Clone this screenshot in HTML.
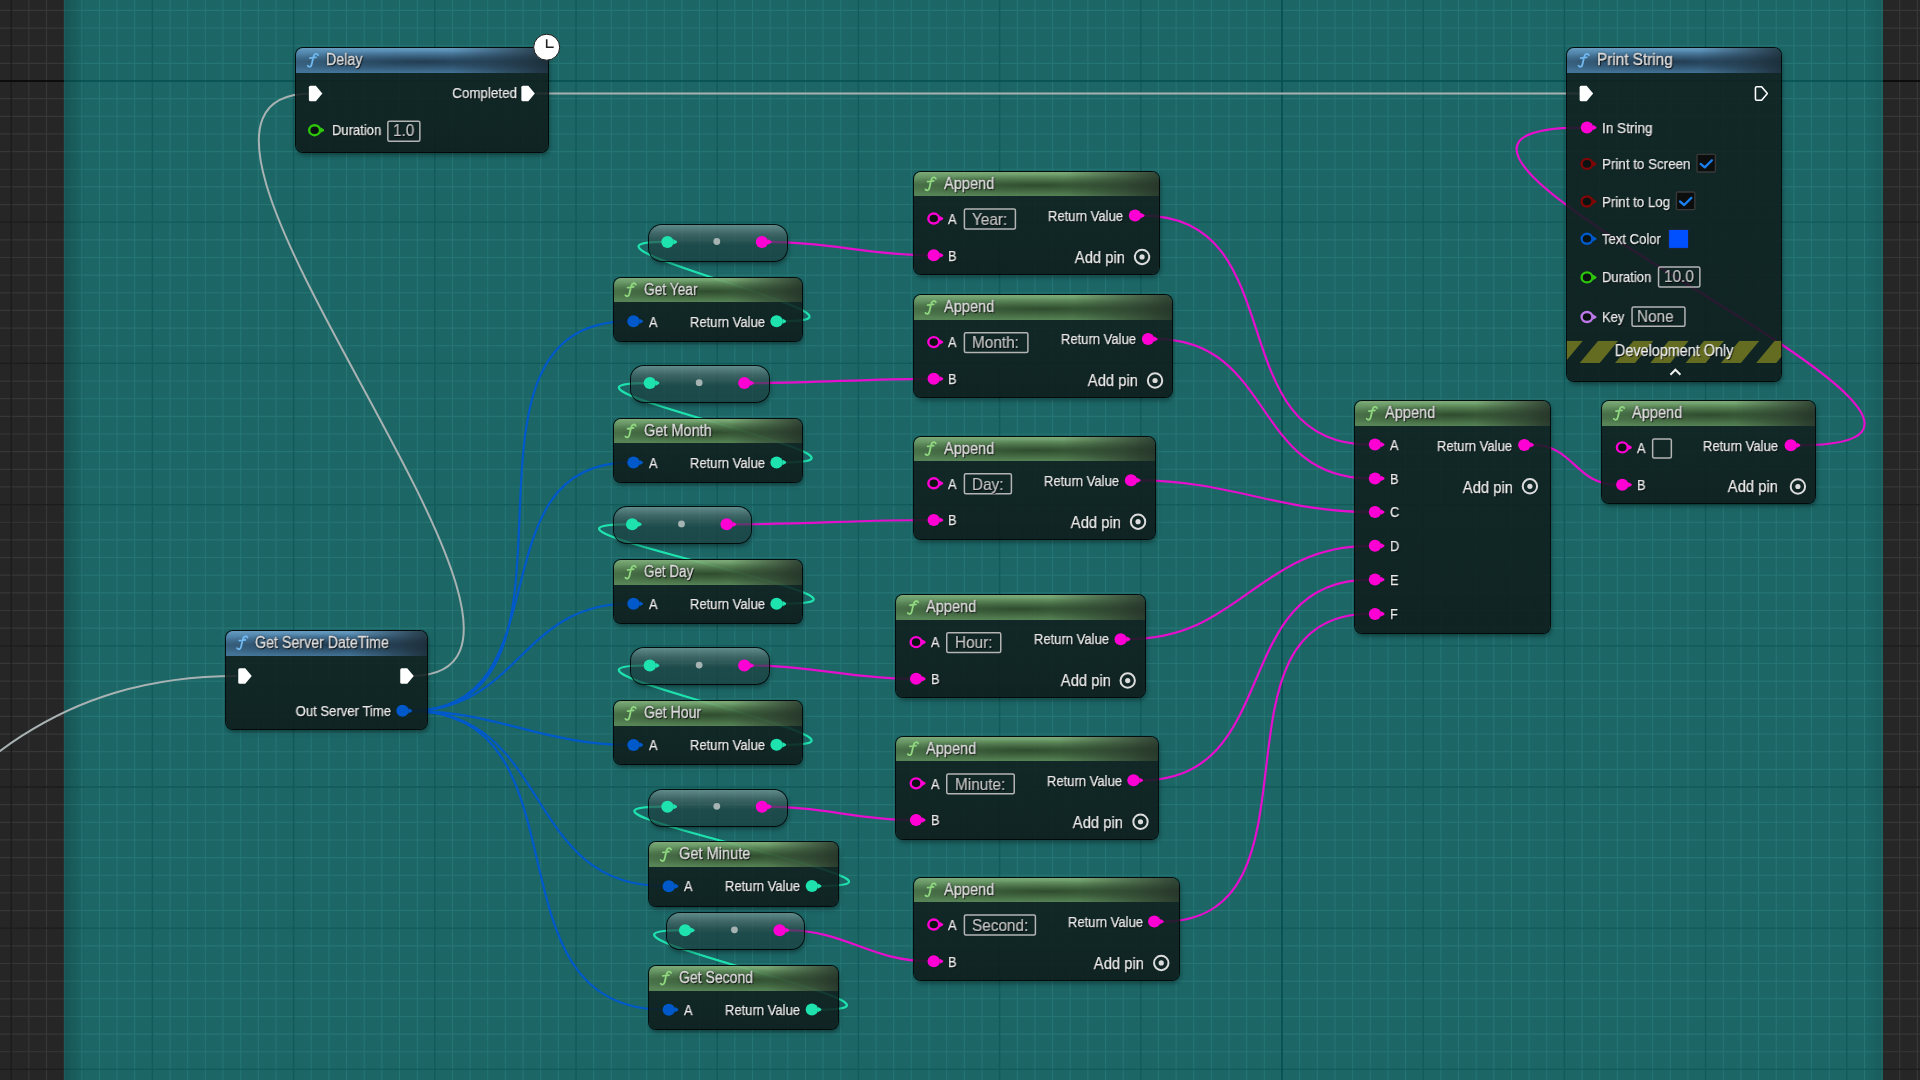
<!DOCTYPE html><html><head><meta charset="utf-8"><style>html,body{margin:0;padding:0;width:1920px;height:1080px;overflow:hidden;background:#262626;font-family:"Liberation Sans", sans-serif;}
.n{position:absolute;border-radius:7px;box-shadow:0 0 0 1px rgba(0,0,0,0.85),1px 3px 5px rgba(0,0,0,0.42);}
.hd{position:absolute;left:0;top:0;right:0;border-radius:7px 7px 0 0;}
.bd{position:absolute;left:0;right:0;bottom:0;border-radius:0 0 7px 7px;background:linear-gradient(to bottom,rgba(16,30,29,0.86),rgba(13,26,25,0.88));}
.hb{background:linear-gradient(to right,rgba(20,30,36,0) 0%,rgba(20,30,36,0) 62%,rgba(20,30,36,0.75) 100%),radial-gradient(ellipse 72% 45% at 50% 56%,rgba(15,30,45,0.62) 0%,rgba(15,30,45,0) 100%),linear-gradient(to bottom,rgba(110,160,200,0.92) 0%,rgba(90,140,182,0.9) 18%,rgba(70,112,150,0.88) 55%,rgba(72,118,158,0.9) 100%);}
.hg{background:linear-gradient(to right,rgba(28,36,32,0) 0%,rgba(28,36,32,0) 62%,rgba(28,36,32,0.75) 100%),radial-gradient(ellipse 72% 45% at 50% 56%,rgba(25,45,22,0.62) 0%,rgba(25,45,22,0) 100%),linear-gradient(to bottom,rgba(134,176,122,0.92) 0%,rgba(114,158,102,0.9) 18%,rgba(92,132,82,0.88) 55%,rgba(94,136,84,0.9) 100%);}
.t{position:absolute;white-space:nowrap;will-change:transform;color:#ececec;-webkit-text-stroke:0.25px #e0e0e0;text-shadow:1px 1px 1px rgba(0,0,0,0.9);transform-origin:0 50%;line-height:1;}
.tt{font-size:16px;color:#dcdcdc;text-shadow:0 0 3px rgba(0,0,0,0.55),1px 1px 1px rgba(0,0,0,0.9);}
.pl{font-size:13.5px;}
.fi{position:absolute;font-family:"Liberation Serif",serif;font-style:italic;font-size:17px;line-height:1;}
.box{position:absolute;border:1.5px solid #b8b8b8;box-sizing:border-box;border-radius:1px;}
</style></head><body><svg width="1920" height="1080" style="position:absolute;left:0;top:0"><rect x="0" y="0" width="1920" height="1080" fill="#262626"/><rect x="64" y="0" width="1819" height="1080" fill="#1c6666"/><defs><clipPath id="ct"><rect x="64" y="0" width="1819" height="1080"/></clipPath><clipPath id="cd"><path d="M0 0H64V1080H0Z M1883 0H1920V1080H1883Z"/></clipPath></defs><g clip-path="url(#cd)"><path d="M28.85 0V1080M46.50 0V1080M64.15 0V1080M81.80 0V1080M99.45 0V1080M117.10 0V1080M134.75 0V1080M170.05 0V1080M187.70 0V1080M205.35 0V1080M223.00 0V1080M240.65 0V1080M258.30 0V1080M275.95 0V1080M311.25 0V1080M328.90 0V1080M346.55 0V1080M364.20 0V1080M381.85 0V1080M399.50 0V1080M417.15 0V1080M452.45 0V1080M470.10 0V1080M487.75 0V1080M505.40 0V1080M523.05 0V1080M540.70 0V1080M558.35 0V1080M593.65 0V1080M611.30 0V1080M628.95 0V1080M646.60 0V1080M664.25 0V1080M681.90 0V1080M699.55 0V1080M734.85 0V1080M752.50 0V1080M770.15 0V1080M787.80 0V1080M805.45 0V1080M823.10 0V1080M840.75 0V1080M876.05 0V1080M893.70 0V1080M911.35 0V1080M929.00 0V1080M946.65 0V1080M964.30 0V1080M981.95 0V1080M1017.25 0V1080M1034.90 0V1080M1052.55 0V1080M1070.20 0V1080M1087.85 0V1080M1105.50 0V1080M1123.15 0V1080M1158.45 0V1080M1176.10 0V1080M1193.75 0V1080M1211.40 0V1080M1229.05 0V1080M1246.70 0V1080M1264.35 0V1080M1299.65 0V1080M1317.30 0V1080M1334.95 0V1080M1352.60 0V1080M1370.25 0V1080M1387.90 0V1080M1405.55 0V1080M1440.85 0V1080M1458.50 0V1080M1476.15 0V1080M1493.80 0V1080M1511.45 0V1080M1529.10 0V1080M1546.75 0V1080M1582.05 0V1080M1599.70 0V1080M1617.35 0V1080M1635.00 0V1080M1652.65 0V1080M1670.30 0V1080M1687.95 0V1080M1723.25 0V1080M1740.90 0V1080M1758.55 0V1080M1776.20 0V1080M1793.85 0V1080M1811.50 0V1080M1829.15 0V1080M1864.45 0V1080M1882.10 0V1080M1899.75 0V1080M1917.40 0V1080M0 10.40H1920M0 28.05H1920M0 45.70H1920M0 63.35H1920M0 98.65H1920M0 116.30H1920M0 133.95H1920M0 151.60H1920M0 169.25H1920M0 186.90H1920M0 204.55H1920M0 239.85H1920M0 257.50H1920M0 275.15H1920M0 292.80H1920M0 310.45H1920M0 328.10H1920M0 345.75H1920M0 381.05H1920M0 398.70H1920M0 416.35H1920M0 434.00H1920M0 451.65H1920M0 469.30H1920M0 486.95H1920M0 522.25H1920M0 539.90H1920M0 557.55H1920M0 575.20H1920M0 592.85H1920M0 610.50H1920M0 628.15H1920M0 663.45H1920M0 681.10H1920M0 698.75H1920M0 716.40H1920M0 734.05H1920M0 751.70H1920M0 769.35H1920M0 804.65H1920M0 822.30H1920M0 839.95H1920M0 857.60H1920M0 875.25H1920M0 892.90H1920M0 910.55H1920M0 945.85H1920M0 963.50H1920M0 981.15H1920M0 998.80H1920M0 1016.45H1920M0 1034.10H1920M0 1051.75H1920" stroke="#373737" stroke-width="1.2" fill="none"/><path d="M11.20 0V1080M152.40 0V1080M293.60 0V1080M434.80 0V1080M576.00 0V1080M717.20 0V1080M858.40 0V1080M999.60 0V1080M1140.80 0V1080M1423.20 0V1080M1564.40 0V1080M1705.60 0V1080M1846.80 0V1080M0 222.20H1920M0 363.40H1920M0 504.60H1920M0 645.80H1920M0 787.00H1920M0 928.20H1920M0 1069.40H1920" stroke="#1c1c1c" stroke-width="1.3" fill="none"/><path d="M1282.0 0V1080M0 81.0H1920" stroke="#050505" stroke-width="1.6" fill="none"/></g><g clip-path="url(#ct)"><path d="M28.85 0V1080M46.50 0V1080M64.15 0V1080M81.80 0V1080M99.45 0V1080M117.10 0V1080M134.75 0V1080M170.05 0V1080M187.70 0V1080M205.35 0V1080M223.00 0V1080M240.65 0V1080M258.30 0V1080M275.95 0V1080M311.25 0V1080M328.90 0V1080M346.55 0V1080M364.20 0V1080M381.85 0V1080M399.50 0V1080M417.15 0V1080M452.45 0V1080M470.10 0V1080M487.75 0V1080M505.40 0V1080M523.05 0V1080M540.70 0V1080M558.35 0V1080M593.65 0V1080M611.30 0V1080M628.95 0V1080M646.60 0V1080M664.25 0V1080M681.90 0V1080M699.55 0V1080M734.85 0V1080M752.50 0V1080M770.15 0V1080M787.80 0V1080M805.45 0V1080M823.10 0V1080M840.75 0V1080M876.05 0V1080M893.70 0V1080M911.35 0V1080M929.00 0V1080M946.65 0V1080M964.30 0V1080M981.95 0V1080M1017.25 0V1080M1034.90 0V1080M1052.55 0V1080M1070.20 0V1080M1087.85 0V1080M1105.50 0V1080M1123.15 0V1080M1158.45 0V1080M1176.10 0V1080M1193.75 0V1080M1211.40 0V1080M1229.05 0V1080M1246.70 0V1080M1264.35 0V1080M1299.65 0V1080M1317.30 0V1080M1334.95 0V1080M1352.60 0V1080M1370.25 0V1080M1387.90 0V1080M1405.55 0V1080M1440.85 0V1080M1458.50 0V1080M1476.15 0V1080M1493.80 0V1080M1511.45 0V1080M1529.10 0V1080M1546.75 0V1080M1582.05 0V1080M1599.70 0V1080M1617.35 0V1080M1635.00 0V1080M1652.65 0V1080M1670.30 0V1080M1687.95 0V1080M1723.25 0V1080M1740.90 0V1080M1758.55 0V1080M1776.20 0V1080M1793.85 0V1080M1811.50 0V1080M1829.15 0V1080M1864.45 0V1080M1882.10 0V1080M1899.75 0V1080M1917.40 0V1080M0 10.40H1920M0 28.05H1920M0 45.70H1920M0 63.35H1920M0 98.65H1920M0 116.30H1920M0 133.95H1920M0 151.60H1920M0 169.25H1920M0 186.90H1920M0 204.55H1920M0 239.85H1920M0 257.50H1920M0 275.15H1920M0 292.80H1920M0 310.45H1920M0 328.10H1920M0 345.75H1920M0 381.05H1920M0 398.70H1920M0 416.35H1920M0 434.00H1920M0 451.65H1920M0 469.30H1920M0 486.95H1920M0 522.25H1920M0 539.90H1920M0 557.55H1920M0 575.20H1920M0 592.85H1920M0 610.50H1920M0 628.15H1920M0 663.45H1920M0 681.10H1920M0 698.75H1920M0 716.40H1920M0 734.05H1920M0 751.70H1920M0 769.35H1920M0 804.65H1920M0 822.30H1920M0 839.95H1920M0 857.60H1920M0 875.25H1920M0 892.90H1920M0 910.55H1920M0 945.85H1920M0 963.50H1920M0 981.15H1920M0 998.80H1920M0 1016.45H1920M0 1034.10H1920M0 1051.75H1920" stroke="#267575" stroke-width="1.1" fill="none"/><path d="M11.20 0V1080M152.40 0V1080M293.60 0V1080M434.80 0V1080M576.00 0V1080M717.20 0V1080M858.40 0V1080M999.60 0V1080M1140.80 0V1080M1423.20 0V1080M1564.40 0V1080M1705.60 0V1080M1846.80 0V1080M0 222.20H1920M0 363.40H1920M0 504.60H1920M0 645.80H1920M0 787.00H1920M0 928.20H1920M0 1069.40H1920" stroke="#135a5a" stroke-width="1.3" fill="none"/><path d="M1282.0 0V1080M0 81.0H1920" stroke="#054f50" stroke-width="1.6" fill="none"/><defs><linearGradient id="vl" x1="0" x2="1" y1="0" y2="0"><stop offset="0" stop-color="#000" stop-opacity="0.18"/><stop offset="1" stop-color="#000" stop-opacity="0"/></linearGradient><linearGradient id="vr" x1="1" x2="0" y1="0" y2="0"><stop offset="0" stop-color="#000" stop-opacity="0.1"/><stop offset="1" stop-color="#000" stop-opacity="0"/></linearGradient></defs><rect x="64" y="0" width="22" height="1080" fill="url(#vl)"/><rect x="1865" y="0" width="18" height="1080" fill="url(#vr)"/></g></svg><svg width="1920" height="1080" style="position:absolute;left:0;top:0"><path d="M-480.00 1060.00C-112.98 1060.00 -130.02 675.95 237.00 675.95" stroke="#a8b2b2" stroke-width="2.0" fill="none"/><path d="M411.00 675.95C627.27 675.95 95.33 93.50 311.60 93.50" stroke="#a8b2b2" stroke-width="2.0" fill="none"/><path d="M536.10 93.50C869.43 93.50 1249.07 93.50 1582.40 93.50" stroke="#a8b2b2" stroke-width="2.2" fill="none"/><path d="M410.50 710.85C613.03 710.85 426.07 321.35 628.60 321.35" stroke="#0059cb" stroke-width="2.2" fill="none"/><path d="M410.50 710.85C565.97 710.85 473.13 462.55 628.60 462.55" stroke="#0059cb" stroke-width="2.2" fill="none"/><path d="M410.50 710.85C518.90 710.85 520.20 603.75 628.60 603.75" stroke="#0059cb" stroke-width="2.2" fill="none"/><path d="M410.50 710.85C494.57 710.85 544.53 744.95 628.60 744.95" stroke="#0059cb" stroke-width="2.2" fill="none"/><path d="M410.50 710.85C553.40 710.85 521.00 886.15 663.90 886.15" stroke="#0059cb" stroke-width="2.2" fill="none"/><path d="M410.50 710.85C594.58 710.85 479.82 1009.70 663.90 1009.70" stroke="#0059cb" stroke-width="2.2" fill="none"/><path d="M784.60 321.25C905.01 321.25 543.09 241.90 663.50 241.90" stroke="#1fe3af" stroke-width="2.2" fill="none"/><path d="M784.60 462.45C916.78 462.45 513.67 383.10 645.85 383.10" stroke="#1fe3af" stroke-width="2.2" fill="none"/><path d="M784.60 603.65C928.54 603.65 484.26 524.30 628.20 524.30" stroke="#1fe3af" stroke-width="2.2" fill="none"/><path d="M784.60 744.85C916.78 744.85 513.67 665.50 645.85 665.50" stroke="#1fe3af" stroke-width="2.2" fill="none"/><path d="M819.90 886.05C963.84 886.05 519.56 806.70 663.50 806.70" stroke="#1fe3af" stroke-width="2.2" fill="none"/><path d="M819.90 1009.60C952.08 1009.60 548.97 930.25 681.15 930.25" stroke="#1fe3af" stroke-width="2.2" fill="none"/><path d="M770.00 241.90C827.33 241.90 871.32 255.25 928.65 255.25" stroke="#e60ecd" stroke-width="2.2" fill="none"/><path d="M752.35 383.10C812.55 383.10 868.45 378.80 928.65 378.80" stroke="#e60ecd" stroke-width="2.2" fill="none"/><path d="M734.70 524.30C800.78 524.30 862.57 520.00 928.65 520.00" stroke="#e60ecd" stroke-width="2.2" fill="none"/><path d="M752.35 665.50C809.68 665.50 853.67 678.85 911.00 678.85" stroke="#e60ecd" stroke-width="2.2" fill="none"/><path d="M770.00 806.70C821.45 806.70 859.55 820.05 911.00 820.05" stroke="#e60ecd" stroke-width="2.2" fill="none"/><path d="M787.65 930.25C844.98 930.25 871.32 961.25 928.65 961.25" stroke="#e60ecd" stroke-width="2.2" fill="none"/><path d="M1143.05 215.55C1295.02 215.55 1217.93 444.60 1369.90 444.60" stroke="#e60ecd" stroke-width="2.2" fill="none"/><path d="M1156.05 339.10C1273.77 339.10 1252.18 478.40 1369.90 478.40" stroke="#e60ecd" stroke-width="2.2" fill="none"/><path d="M1139.05 480.30C1226.60 480.30 1282.35 512.10 1369.90 512.10" stroke="#e60ecd" stroke-width="2.2" fill="none"/><path d="M1128.70 639.15C1240.22 639.15 1258.38 545.80 1369.90 545.80" stroke="#e60ecd" stroke-width="2.2" fill="none"/><path d="M1141.50 780.35C1284.55 780.35 1226.85 579.60 1369.90 579.60" stroke="#e60ecd" stroke-width="2.2" fill="none"/><path d="M1162.25 921.55C1334.02 921.55 1198.13 613.90 1369.90 613.90" stroke="#e60ecd" stroke-width="2.2" fill="none"/><path d="M1532.30 444.90C1573.83 444.90 1575.47 484.80 1617.00 484.80" stroke="#e60ecd" stroke-width="2.2" fill="none"/><path d="M1798.80 445.30C2093.07 445.30 1288.13 127.60 1582.40 127.60" stroke="#e60ecd" stroke-width="2.2" fill="none"/></svg><div class="n" style="left:296.10px;top:48.20px;width:252.20px;height:103.50px;"><div class="hd hb" style="height:24.50px"></div><div class="bd" style="top:24.50px"></div></div><div class="n" style="left:1566.90px;top:48.20px;width:214.30px;height:332.60px;"><div class="hd hb" style="height:24.50px"></div><div class="bd" style="top:24.50px"></div></div><div class="n" style="left:225.50px;top:630.65px;width:201.80px;height:97.90px;"><div class="hd hb" style="height:25.00px"></div><div class="bd" style="top:25.00px"></div></div><div class="n" style="left:913.85px;top:171.75px;width:245.60px;height:102.00px;"><div class="hd hg" style="height:24.50px"></div><div class="bd" style="top:24.50px"></div></div><div class="n" style="left:913.85px;top:295.30px;width:258.60px;height:102.00px;"><div class="hd hg" style="height:24.50px"></div><div class="bd" style="top:24.50px"></div></div><div class="n" style="left:913.85px;top:436.50px;width:241.60px;height:102.00px;"><div class="hd hg" style="height:24.50px"></div><div class="bd" style="top:24.50px"></div></div><div class="n" style="left:896.20px;top:595.35px;width:248.90px;height:102.00px;"><div class="hd hg" style="height:24.50px"></div><div class="bd" style="top:24.50px"></div></div><div class="n" style="left:896.20px;top:736.55px;width:261.70px;height:102.00px;"><div class="hd hg" style="height:24.50px"></div><div class="bd" style="top:24.50px"></div></div><div class="n" style="left:913.85px;top:877.75px;width:264.80px;height:102.00px;"><div class="hd hg" style="height:24.50px"></div><div class="bd" style="top:24.50px"></div></div><div class="n" style="left:1355.10px;top:401.20px;width:194.50px;height:232.30px;"><div class="hd hg" style="height:24.50px"></div><div class="bd" style="top:24.50px"></div></div><div class="n" style="left:1602.20px;top:401.20px;width:212.60px;height:101.70px;"><div class="hd hg" style="height:24.50px"></div><div class="bd" style="top:24.50px"></div></div><div class="n" style="left:613.80px;top:277.65px;width:188.50px;height:63.20px;"><div class="hd hg" style="height:24.50px"></div><div class="bd" style="top:24.50px"></div></div><div class="n" style="left:613.80px;top:418.85px;width:188.50px;height:63.20px;"><div class="hd hg" style="height:24.50px"></div><div class="bd" style="top:24.50px"></div></div><div class="n" style="left:613.80px;top:560.05px;width:188.50px;height:63.20px;"><div class="hd hg" style="height:24.50px"></div><div class="bd" style="top:24.50px"></div></div><div class="n" style="left:613.80px;top:701.25px;width:188.50px;height:63.20px;"><div class="hd hg" style="height:24.50px"></div><div class="bd" style="top:24.50px"></div></div><div class="n" style="left:649.10px;top:842.45px;width:188.50px;height:63.20px;"><div class="hd hg" style="height:24.50px"></div><div class="bd" style="top:24.50px"></div></div><div class="n" style="left:649.10px;top:966.00px;width:188.50px;height:63.20px;"><div class="hd hg" style="height:24.50px"></div><div class="bd" style="top:24.50px"></div></div><div class="n" style="left:649.10px;top:224.70px;width:137.50px;height:36.00px;border-radius:13px;background:linear-gradient(to bottom,rgba(120,150,150,0.75) 0%,rgba(75,100,100,0.7) 25%,rgba(30,60,60,0.65) 55%,rgba(25,55,55,0.65) 100%);"></div><div class="n" style="left:631.45px;top:365.90px;width:137.50px;height:36.00px;border-radius:13px;background:linear-gradient(to bottom,rgba(120,150,150,0.75) 0%,rgba(75,100,100,0.7) 25%,rgba(30,60,60,0.65) 55%,rgba(25,55,55,0.65) 100%);"></div><div class="n" style="left:613.80px;top:507.10px;width:137.50px;height:36.00px;border-radius:13px;background:linear-gradient(to bottom,rgba(120,150,150,0.75) 0%,rgba(75,100,100,0.7) 25%,rgba(30,60,60,0.65) 55%,rgba(25,55,55,0.65) 100%);"></div><div class="n" style="left:631.45px;top:648.30px;width:137.50px;height:36.00px;border-radius:13px;background:linear-gradient(to bottom,rgba(120,150,150,0.75) 0%,rgba(75,100,100,0.7) 25%,rgba(30,60,60,0.65) 55%,rgba(25,55,55,0.65) 100%);"></div><div class="n" style="left:649.10px;top:789.50px;width:137.50px;height:36.00px;border-radius:13px;background:linear-gradient(to bottom,rgba(120,150,150,0.75) 0%,rgba(75,100,100,0.7) 25%,rgba(30,60,60,0.65) 55%,rgba(25,55,55,0.65) 100%);"></div><div class="n" style="left:666.75px;top:913.05px;width:137.50px;height:36.00px;border-radius:13px;background:linear-gradient(to bottom,rgba(120,150,150,0.75) 0%,rgba(75,100,100,0.7) 25%,rgba(30,60,60,0.65) 55%,rgba(25,55,55,0.65) 100%);"></div><svg width="1920" height="1080" style="position:absolute;left:0;top:0"><path d="M310.35 85.75L315.85 85.75L322.35 93.50L315.85 101.25L310.35 101.25Q308.85 101.25 308.85 99.75L308.85 87.25Q308.85 85.75 310.35 85.75Z" fill="#ffffff"/><path d="M522.85 85.75L528.35 85.75L534.85 93.50L528.35 101.25L522.85 101.25Q521.35 101.25 521.35 99.75L521.35 87.25Q521.35 85.75 522.85 85.75Z" fill="#ffffff"/><ellipse cx="314.60" cy="130.20" rx="5.4" ry="5.0" fill="#0b1212" stroke="#2ec60c" stroke-width="2.4"/><path d="M320.60 127.60Q324.20 129.20 324.20 130.20Q324.20 131.20 320.60 132.80Q320.00 130.20 320.60 127.60Z" fill="#2ec60c"/><path d="M1581.15 85.75L1586.65 85.75L1593.15 93.50L1586.65 101.25L1581.15 101.25Q1579.65 101.25 1579.65 99.75L1579.65 87.25Q1579.65 85.75 1581.15 85.75Z" fill="#ffffff"/><path d="M1756.15 85.75L1761.65 85.75L1768.15 93.50L1761.65 101.25L1756.15 101.25Q1754.65 101.25 1754.65 99.75L1754.65 87.25Q1754.65 85.75 1756.15 85.75Z" fill="none" stroke="#ffffff" stroke-width="1.8" stroke-linejoin="round" transform="translate(1761.40 93.50) scale(0.88) translate(-1761.40 -93.50)"/><ellipse cx="1587.00" cy="127.60" rx="6.2" ry="6.0" fill="#ff00d4"/><path d="M1593.00 125.00Q1596.60 126.60 1596.60 127.60Q1596.60 128.60 1593.00 130.20Q1592.40 127.60 1593.00 125.00Z" fill="#ff00d4"/><ellipse cx="1587.00" cy="163.90" rx="5.4" ry="5.0" fill="#0b1212" stroke="#7e0606" stroke-width="2.4"/><path d="M1593.00 161.30Q1596.60 162.90 1596.60 163.90Q1596.60 164.90 1593.00 166.50Q1592.40 163.90 1593.00 161.30Z" fill="#7e0606"/><ellipse cx="1587.00" cy="201.50" rx="5.4" ry="5.0" fill="#0b1212" stroke="#7e0606" stroke-width="2.4"/><path d="M1593.00 198.90Q1596.60 200.50 1596.60 201.50Q1596.60 202.50 1593.00 204.10Q1592.40 201.50 1593.00 198.90Z" fill="#7e0606"/><ellipse cx="1587.00" cy="238.80" rx="5.4" ry="5.0" fill="#0b1212" stroke="#0059cb" stroke-width="2.4"/><path d="M1593.00 236.20Q1596.60 237.80 1596.60 238.80Q1596.60 239.80 1593.00 241.40Q1592.40 238.80 1593.00 236.20Z" fill="#0059cb"/><ellipse cx="1587.00" cy="277.40" rx="5.4" ry="5.0" fill="#0b1212" stroke="#2ec60c" stroke-width="2.4"/><path d="M1593.00 274.80Q1596.60 276.40 1596.60 277.40Q1596.60 278.40 1593.00 280.00Q1592.40 277.40 1593.00 274.80Z" fill="#2ec60c"/><ellipse cx="1587.00" cy="317.00" rx="5.4" ry="5.0" fill="#0b1212" stroke="#bb78e6" stroke-width="2.4"/><path d="M1593.00 314.40Q1596.60 316.00 1596.60 317.00Q1596.60 318.00 1593.00 319.60Q1592.40 317.00 1593.00 314.40Z" fill="#bb78e6"/><path d="M239.75 668.20L245.25 668.20L251.75 675.95L245.25 683.70L239.75 683.70Q238.25 683.70 238.25 682.20L238.25 669.70Q238.25 668.20 239.75 668.20Z" fill="#ffffff"/><path d="M401.75 668.20L407.25 668.20L413.75 675.95L407.25 683.70L401.75 683.70Q400.25 683.70 400.25 682.20L400.25 669.70Q400.25 668.20 401.75 668.20Z" fill="#ffffff"/><ellipse cx="402.50" cy="710.85" rx="6.2" ry="6.0" fill="#0059cb"/><path d="M408.50 708.25Q412.10 709.85 412.10 710.85Q412.10 711.85 408.50 713.45Q407.90 710.85 408.50 708.25Z" fill="#0059cb"/><ellipse cx="933.75" cy="218.55" rx="5.4" ry="5.0" fill="#0b1212" stroke="#ff00d4" stroke-width="2.4"/><path d="M939.75 215.95Q943.35 217.55 943.35 218.55Q943.35 219.55 939.75 221.15Q939.15 218.55 939.75 215.95Z" fill="#ff00d4"/><ellipse cx="1135.05" cy="215.55" rx="6.2" ry="6.0" fill="#ff00d4"/><path d="M1141.05 212.95Q1144.65 214.55 1144.65 215.55Q1144.65 216.55 1141.05 218.15Q1140.45 215.55 1141.05 212.95Z" fill="#ff00d4"/><ellipse cx="933.75" cy="255.25" rx="6.2" ry="6.0" fill="#ff00d4"/><path d="M939.75 252.65Q943.35 254.25 943.35 255.25Q943.35 256.25 939.75 257.85Q939.15 255.25 939.75 252.65Z" fill="#ff00d4"/><ellipse cx="933.75" cy="342.10" rx="5.4" ry="5.0" fill="#0b1212" stroke="#ff00d4" stroke-width="2.4"/><path d="M939.75 339.50Q943.35 341.10 943.35 342.10Q943.35 343.10 939.75 344.70Q939.15 342.10 939.75 339.50Z" fill="#ff00d4"/><ellipse cx="1148.05" cy="339.10" rx="6.2" ry="6.0" fill="#ff00d4"/><path d="M1154.05 336.50Q1157.65 338.10 1157.65 339.10Q1157.65 340.10 1154.05 341.70Q1153.45 339.10 1154.05 336.50Z" fill="#ff00d4"/><ellipse cx="933.75" cy="378.80" rx="6.2" ry="6.0" fill="#ff00d4"/><path d="M939.75 376.20Q943.35 377.80 943.35 378.80Q943.35 379.80 939.75 381.40Q939.15 378.80 939.75 376.20Z" fill="#ff00d4"/><ellipse cx="933.75" cy="483.30" rx="5.4" ry="5.0" fill="#0b1212" stroke="#ff00d4" stroke-width="2.4"/><path d="M939.75 480.70Q943.35 482.30 943.35 483.30Q943.35 484.30 939.75 485.90Q939.15 483.30 939.75 480.70Z" fill="#ff00d4"/><ellipse cx="1131.05" cy="480.30" rx="6.2" ry="6.0" fill="#ff00d4"/><path d="M1137.05 477.70Q1140.65 479.30 1140.65 480.30Q1140.65 481.30 1137.05 482.90Q1136.45 480.30 1137.05 477.70Z" fill="#ff00d4"/><ellipse cx="933.75" cy="520.00" rx="6.2" ry="6.0" fill="#ff00d4"/><path d="M939.75 517.40Q943.35 519.00 943.35 520.00Q943.35 521.00 939.75 522.60Q939.15 520.00 939.75 517.40Z" fill="#ff00d4"/><ellipse cx="916.10" cy="642.15" rx="5.4" ry="5.0" fill="#0b1212" stroke="#ff00d4" stroke-width="2.4"/><path d="M922.10 639.55Q925.70 641.15 925.70 642.15Q925.70 643.15 922.10 644.75Q921.50 642.15 922.10 639.55Z" fill="#ff00d4"/><ellipse cx="1120.70" cy="639.15" rx="6.2" ry="6.0" fill="#ff00d4"/><path d="M1126.70 636.55Q1130.30 638.15 1130.30 639.15Q1130.30 640.15 1126.70 641.75Q1126.10 639.15 1126.70 636.55Z" fill="#ff00d4"/><ellipse cx="916.10" cy="678.85" rx="6.2" ry="6.0" fill="#ff00d4"/><path d="M922.10 676.25Q925.70 677.85 925.70 678.85Q925.70 679.85 922.10 681.45Q921.50 678.85 922.10 676.25Z" fill="#ff00d4"/><ellipse cx="916.10" cy="783.35" rx="5.4" ry="5.0" fill="#0b1212" stroke="#ff00d4" stroke-width="2.4"/><path d="M922.10 780.75Q925.70 782.35 925.70 783.35Q925.70 784.35 922.10 785.95Q921.50 783.35 922.10 780.75Z" fill="#ff00d4"/><ellipse cx="1133.50" cy="780.35" rx="6.2" ry="6.0" fill="#ff00d4"/><path d="M1139.50 777.75Q1143.10 779.35 1143.10 780.35Q1143.10 781.35 1139.50 782.95Q1138.90 780.35 1139.50 777.75Z" fill="#ff00d4"/><ellipse cx="916.10" cy="820.05" rx="6.2" ry="6.0" fill="#ff00d4"/><path d="M922.10 817.45Q925.70 819.05 925.70 820.05Q925.70 821.05 922.10 822.65Q921.50 820.05 922.10 817.45Z" fill="#ff00d4"/><ellipse cx="933.75" cy="924.55" rx="5.4" ry="5.0" fill="#0b1212" stroke="#ff00d4" stroke-width="2.4"/><path d="M939.75 921.95Q943.35 923.55 943.35 924.55Q943.35 925.55 939.75 927.15Q939.15 924.55 939.75 921.95Z" fill="#ff00d4"/><ellipse cx="1154.25" cy="921.55" rx="6.2" ry="6.0" fill="#ff00d4"/><path d="M1160.25 918.95Q1163.85 920.55 1163.85 921.55Q1163.85 922.55 1160.25 924.15Q1159.65 921.55 1160.25 918.95Z" fill="#ff00d4"/><ellipse cx="933.75" cy="961.25" rx="6.2" ry="6.0" fill="#ff00d4"/><path d="M939.75 958.65Q943.35 960.25 943.35 961.25Q943.35 962.25 939.75 963.85Q939.15 961.25 939.75 958.65Z" fill="#ff00d4"/><ellipse cx="1375.00" cy="444.60" rx="6.2" ry="6.0" fill="#ff00d4"/><path d="M1381.00 442.00Q1384.60 443.60 1384.60 444.60Q1384.60 445.60 1381.00 447.20Q1380.40 444.60 1381.00 442.00Z" fill="#ff00d4"/><ellipse cx="1375.00" cy="478.40" rx="6.2" ry="6.0" fill="#ff00d4"/><path d="M1381.00 475.80Q1384.60 477.40 1384.60 478.40Q1384.60 479.40 1381.00 481.00Q1380.40 478.40 1381.00 475.80Z" fill="#ff00d4"/><ellipse cx="1375.00" cy="512.10" rx="6.2" ry="6.0" fill="#ff00d4"/><path d="M1381.00 509.50Q1384.60 511.10 1384.60 512.10Q1384.60 513.10 1381.00 514.70Q1380.40 512.10 1381.00 509.50Z" fill="#ff00d4"/><ellipse cx="1375.00" cy="545.80" rx="6.2" ry="6.0" fill="#ff00d4"/><path d="M1381.00 543.20Q1384.60 544.80 1384.60 545.80Q1384.60 546.80 1381.00 548.40Q1380.40 545.80 1381.00 543.20Z" fill="#ff00d4"/><ellipse cx="1375.00" cy="579.60" rx="6.2" ry="6.0" fill="#ff00d4"/><path d="M1381.00 577.00Q1384.60 578.60 1384.60 579.60Q1384.60 580.60 1381.00 582.20Q1380.40 579.60 1381.00 577.00Z" fill="#ff00d4"/><ellipse cx="1375.00" cy="613.90" rx="6.2" ry="6.0" fill="#ff00d4"/><path d="M1381.00 611.30Q1384.60 612.90 1384.60 613.90Q1384.60 614.90 1381.00 616.50Q1380.40 613.90 1381.00 611.30Z" fill="#ff00d4"/><ellipse cx="1524.30" cy="444.90" rx="6.2" ry="6.0" fill="#ff00d4"/><path d="M1530.30 442.30Q1533.90 443.90 1533.90 444.90Q1533.90 445.90 1530.30 447.50Q1529.70 444.90 1530.30 442.30Z" fill="#ff00d4"/><ellipse cx="1622.30" cy="447.40" rx="5.4" ry="5.0" fill="#0b1212" stroke="#ff00d4" stroke-width="2.4"/><path d="M1628.30 444.80Q1631.90 446.40 1631.90 447.40Q1631.90 448.40 1628.30 450.00Q1627.70 447.40 1628.30 444.80Z" fill="#ff00d4"/><ellipse cx="1790.80" cy="445.30" rx="6.2" ry="6.0" fill="#ff00d4"/><path d="M1796.80 442.70Q1800.40 444.30 1800.40 445.30Q1800.40 446.30 1796.80 447.90Q1796.20 445.30 1796.80 442.70Z" fill="#ff00d4"/><ellipse cx="1622.30" cy="484.80" rx="6.2" ry="6.0" fill="#ff00d4"/><path d="M1628.30 482.20Q1631.90 483.80 1631.90 484.80Q1631.90 485.80 1628.30 487.40Q1627.70 484.80 1628.30 482.20Z" fill="#ff00d4"/><ellipse cx="633.50" cy="321.35" rx="6.2" ry="6.0" fill="#0059cb"/><path d="M639.50 318.75Q643.10 320.35 643.10 321.35Q643.10 322.35 639.50 323.95Q638.90 321.35 639.50 318.75Z" fill="#0059cb"/><ellipse cx="776.60" cy="321.25" rx="6.2" ry="6.0" fill="#1fe3af"/><path d="M782.60 318.65Q786.20 320.25 786.20 321.25Q786.20 322.25 782.60 323.85Q782.00 321.25 782.60 318.65Z" fill="#1fe3af"/><ellipse cx="633.50" cy="462.55" rx="6.2" ry="6.0" fill="#0059cb"/><path d="M639.50 459.95Q643.10 461.55 643.10 462.55Q643.10 463.55 639.50 465.15Q638.90 462.55 639.50 459.95Z" fill="#0059cb"/><ellipse cx="776.60" cy="462.45" rx="6.2" ry="6.0" fill="#1fe3af"/><path d="M782.60 459.85Q786.20 461.45 786.20 462.45Q786.20 463.45 782.60 465.05Q782.00 462.45 782.60 459.85Z" fill="#1fe3af"/><ellipse cx="633.50" cy="603.75" rx="6.2" ry="6.0" fill="#0059cb"/><path d="M639.50 601.15Q643.10 602.75 643.10 603.75Q643.10 604.75 639.50 606.35Q638.90 603.75 639.50 601.15Z" fill="#0059cb"/><ellipse cx="776.60" cy="603.65" rx="6.2" ry="6.0" fill="#1fe3af"/><path d="M782.60 601.05Q786.20 602.65 786.20 603.65Q786.20 604.65 782.60 606.25Q782.00 603.65 782.60 601.05Z" fill="#1fe3af"/><ellipse cx="633.50" cy="744.95" rx="6.2" ry="6.0" fill="#0059cb"/><path d="M639.50 742.35Q643.10 743.95 643.10 744.95Q643.10 745.95 639.50 747.55Q638.90 744.95 639.50 742.35Z" fill="#0059cb"/><ellipse cx="776.60" cy="744.85" rx="6.2" ry="6.0" fill="#1fe3af"/><path d="M782.60 742.25Q786.20 743.85 786.20 744.85Q786.20 745.85 782.60 747.45Q782.00 744.85 782.60 742.25Z" fill="#1fe3af"/><ellipse cx="668.80" cy="886.15" rx="6.2" ry="6.0" fill="#0059cb"/><path d="M674.80 883.55Q678.40 885.15 678.40 886.15Q678.40 887.15 674.80 888.75Q674.20 886.15 674.80 883.55Z" fill="#0059cb"/><ellipse cx="811.90" cy="886.05" rx="6.2" ry="6.0" fill="#1fe3af"/><path d="M817.90 883.45Q821.50 885.05 821.50 886.05Q821.50 887.05 817.90 888.65Q817.30 886.05 817.90 883.45Z" fill="#1fe3af"/><ellipse cx="668.80" cy="1009.70" rx="6.2" ry="6.0" fill="#0059cb"/><path d="M674.80 1007.10Q678.40 1008.70 678.40 1009.70Q678.40 1010.70 674.80 1012.30Q674.20 1009.70 674.80 1007.10Z" fill="#0059cb"/><ellipse cx="811.90" cy="1009.60" rx="6.2" ry="6.0" fill="#1fe3af"/><path d="M817.90 1007.00Q821.50 1008.60 821.50 1009.60Q821.50 1010.60 817.90 1012.20Q817.30 1009.60 817.90 1007.00Z" fill="#1fe3af"/><ellipse cx="667.50" cy="241.90" rx="6.2" ry="6.0" fill="#1fe3af"/><path d="M673.50 239.30Q677.10 240.90 677.10 241.90Q677.10 242.90 673.50 244.50Q672.90 241.90 673.50 239.30Z" fill="#1fe3af"/><ellipse cx="762.00" cy="241.90" rx="6.2" ry="6.0" fill="#ff00d4"/><path d="M768.00 239.30Q771.60 240.90 771.60 241.90Q771.60 242.90 768.00 244.50Q767.40 241.90 768.00 239.30Z" fill="#ff00d4"/><ellipse cx="649.85" cy="383.10" rx="6.2" ry="6.0" fill="#1fe3af"/><path d="M655.85 380.50Q659.45 382.10 659.45 383.10Q659.45 384.10 655.85 385.70Q655.25 383.10 655.85 380.50Z" fill="#1fe3af"/><ellipse cx="744.35" cy="383.10" rx="6.2" ry="6.0" fill="#ff00d4"/><path d="M750.35 380.50Q753.95 382.10 753.95 383.10Q753.95 384.10 750.35 385.70Q749.75 383.10 750.35 380.50Z" fill="#ff00d4"/><ellipse cx="632.20" cy="524.30" rx="6.2" ry="6.0" fill="#1fe3af"/><path d="M638.20 521.70Q641.80 523.30 641.80 524.30Q641.80 525.30 638.20 526.90Q637.60 524.30 638.20 521.70Z" fill="#1fe3af"/><ellipse cx="726.70" cy="524.30" rx="6.2" ry="6.0" fill="#ff00d4"/><path d="M732.70 521.70Q736.30 523.30 736.30 524.30Q736.30 525.30 732.70 526.90Q732.10 524.30 732.70 521.70Z" fill="#ff00d4"/><ellipse cx="649.85" cy="665.50" rx="6.2" ry="6.0" fill="#1fe3af"/><path d="M655.85 662.90Q659.45 664.50 659.45 665.50Q659.45 666.50 655.85 668.10Q655.25 665.50 655.85 662.90Z" fill="#1fe3af"/><ellipse cx="744.35" cy="665.50" rx="6.2" ry="6.0" fill="#ff00d4"/><path d="M750.35 662.90Q753.95 664.50 753.95 665.50Q753.95 666.50 750.35 668.10Q749.75 665.50 750.35 662.90Z" fill="#ff00d4"/><ellipse cx="667.50" cy="806.70" rx="6.2" ry="6.0" fill="#1fe3af"/><path d="M673.50 804.10Q677.10 805.70 677.10 806.70Q677.10 807.70 673.50 809.30Q672.90 806.70 673.50 804.10Z" fill="#1fe3af"/><ellipse cx="762.00" cy="806.70" rx="6.2" ry="6.0" fill="#ff00d4"/><path d="M768.00 804.10Q771.60 805.70 771.60 806.70Q771.60 807.70 768.00 809.30Q767.40 806.70 768.00 804.10Z" fill="#ff00d4"/><ellipse cx="685.15" cy="930.25" rx="6.2" ry="6.0" fill="#1fe3af"/><path d="M691.15 927.65Q694.75 929.25 694.75 930.25Q694.75 931.25 691.15 932.85Q690.55 930.25 691.15 927.65Z" fill="#1fe3af"/><ellipse cx="779.65" cy="930.25" rx="6.2" ry="6.0" fill="#ff00d4"/><path d="M785.65 927.65Q789.25 929.25 789.25 930.25Q789.25 931.25 785.65 932.85Q785.05 930.25 785.65 927.65Z" fill="#ff00d4"/><circle cx="716.80" cy="241.50" r="3.4" fill="#a6b3b3"/><circle cx="699.15" cy="382.70" r="3.4" fill="#a6b3b3"/><circle cx="681.50" cy="523.90" r="3.4" fill="#a6b3b3"/><circle cx="699.15" cy="665.10" r="3.4" fill="#a6b3b3"/><circle cx="716.80" cy="806.30" r="3.4" fill="#a6b3b3"/><circle cx="734.45" cy="929.85" r="3.4" fill="#a6b3b3"/><rect x="387.85" y="121.15" width="32.00" height="20.10" rx="1.5" fill="none" stroke="#b4b4b4" stroke-width="1.5"/><rect x="1658.55" y="266.95" width="41.30" height="20.00" rx="1.5" fill="none" stroke="#b4b4b4" stroke-width="1.5"/><rect x="1632.05" y="306.95" width="52.90" height="19.20" rx="1.5" fill="none" stroke="#b4b4b4" stroke-width="1.5"/><rect x="964.40" y="209.10" width="51.00" height="19.90" rx="1.5" fill="none" stroke="#b4b4b4" stroke-width="1.5"/><rect x="964.40" y="332.65" width="63.50" height="19.90" rx="1.5" fill="none" stroke="#b4b4b4" stroke-width="1.5"/><rect x="964.40" y="473.85" width="47.00" height="19.90" rx="1.5" fill="none" stroke="#b4b4b4" stroke-width="1.5"/><rect x="946.75" y="632.70" width="54.00" height="19.90" rx="1.5" fill="none" stroke="#b4b4b4" stroke-width="1.5"/><rect x="946.75" y="773.90" width="67.50" height="19.90" rx="1.5" fill="none" stroke="#b4b4b4" stroke-width="1.5"/><rect x="964.40" y="915.10" width="71.00" height="19.90" rx="1.5" fill="none" stroke="#b4b4b4" stroke-width="1.5"/><rect x="1652.65" y="438.95" width="18.70" height="19.00" rx="1.5" fill="none" stroke="#b4b4b4" stroke-width="1.5"/><rect x="1697.00" y="154.40" width="18.4" height="17.6" rx="1.2" fill="#0c0e0e" stroke="#383838" stroke-width="1.4"/><path d="M1700.60 163.90L1704.80 167.40L1711.90 160.30" stroke="#1a80f0" stroke-width="2.3" stroke-linecap="round" stroke-linejoin="round" fill="none"/><rect x="1676.40" y="192.00" width="18.4" height="17.6" rx="1.2" fill="#0c0e0e" stroke="#383838" stroke-width="1.4"/><path d="M1680.00 201.50L1684.20 205.00L1691.30 197.90" stroke="#1a80f0" stroke-width="2.3" stroke-linecap="round" stroke-linejoin="round" fill="none"/><rect x="1668.70" y="229.50" width="19.8" height="18.8" fill="#0050ff" stroke="#222" stroke-width="0.8"/><circle cx="1142.05" cy="256.95" r="7.2" fill="none" stroke="#dcdcdc" stroke-width="2"/><circle cx="1142.05" cy="256.95" r="2.6" fill="#dcdcdc"/><circle cx="1155.05" cy="380.50" r="7.2" fill="none" stroke="#dcdcdc" stroke-width="2"/><circle cx="1155.05" cy="380.50" r="2.6" fill="#dcdcdc"/><circle cx="1138.05" cy="521.70" r="7.2" fill="none" stroke="#dcdcdc" stroke-width="2"/><circle cx="1138.05" cy="521.70" r="2.6" fill="#dcdcdc"/><circle cx="1127.70" cy="680.55" r="7.2" fill="none" stroke="#dcdcdc" stroke-width="2"/><circle cx="1127.70" cy="680.55" r="2.6" fill="#dcdcdc"/><circle cx="1140.50" cy="821.75" r="7.2" fill="none" stroke="#dcdcdc" stroke-width="2"/><circle cx="1140.50" cy="821.75" r="2.6" fill="#dcdcdc"/><circle cx="1161.25" cy="962.95" r="7.2" fill="none" stroke="#dcdcdc" stroke-width="2"/><circle cx="1161.25" cy="962.95" r="2.6" fill="#dcdcdc"/><circle cx="1529.90" cy="486.30" r="7.2" fill="none" stroke="#dcdcdc" stroke-width="2"/><circle cx="1529.90" cy="486.30" r="2.6" fill="#dcdcdc"/><circle cx="1797.90" cy="486.50" r="7.2" fill="none" stroke="#dcdcdc" stroke-width="2"/><circle cx="1797.90" cy="486.50" r="2.6" fill="#dcdcdc"/><circle cx="546.70" cy="47.20" r="13" fill="#ffffff" stroke="#1a1a1a" stroke-width="1"/><path d="M546.70 39.20V47.20H553.70" stroke="#222" stroke-width="1.6" fill="none"/><path d="M318.10 55.20C317.10 53.00 314.30 53.50 313.50 56.50L311.70 64.20C311.10 67.00 309.10 67.50 307.70 65.80M309.90 58.10L315.90 57.30" stroke="#70b8f0" stroke-width="1.8" stroke-linecap="round" fill="none"/><path d="M1588.90 55.20C1587.90 53.00 1585.10 53.50 1584.30 56.50L1582.50 64.20C1581.90 67.00 1579.90 67.50 1578.50 65.80M1580.70 58.10L1586.70 57.30" stroke="#70b8f0" stroke-width="1.8" stroke-linecap="round" fill="none"/><path d="M247.50 637.65C246.50 635.45 243.70 635.95 242.90 638.95L241.10 646.65C240.50 649.45 238.50 649.95 237.10 648.25M239.30 640.55L245.30 639.75" stroke="#70b8f0" stroke-width="1.8" stroke-linecap="round" fill="none"/><path d="M935.85 178.75C934.85 176.55 932.05 177.05 931.25 180.05L929.45 187.75C928.85 190.55 926.85 191.05 925.45 189.35M927.65 181.65L933.65 180.85" stroke="#90d880" stroke-width="1.8" stroke-linecap="round" fill="none"/><path d="M935.85 302.30C934.85 300.10 932.05 300.60 931.25 303.60L929.45 311.30C928.85 314.10 926.85 314.60 925.45 312.90M927.65 305.20L933.65 304.40" stroke="#90d880" stroke-width="1.8" stroke-linecap="round" fill="none"/><path d="M935.85 443.50C934.85 441.30 932.05 441.80 931.25 444.80L929.45 452.50C928.85 455.30 926.85 455.80 925.45 454.10M927.65 446.40L933.65 445.60" stroke="#90d880" stroke-width="1.8" stroke-linecap="round" fill="none"/><path d="M918.20 602.35C917.20 600.15 914.40 600.65 913.60 603.65L911.80 611.35C911.20 614.15 909.20 614.65 907.80 612.95M910.00 605.25L916.00 604.45" stroke="#90d880" stroke-width="1.8" stroke-linecap="round" fill="none"/><path d="M918.20 743.55C917.20 741.35 914.40 741.85 913.60 744.85L911.80 752.55C911.20 755.35 909.20 755.85 907.80 754.15M910.00 746.45L916.00 745.65" stroke="#90d880" stroke-width="1.8" stroke-linecap="round" fill="none"/><path d="M935.85 884.75C934.85 882.55 932.05 883.05 931.25 886.05L929.45 893.75C928.85 896.55 926.85 897.05 925.45 895.35M927.65 887.65L933.65 886.85" stroke="#90d880" stroke-width="1.8" stroke-linecap="round" fill="none"/><path d="M1377.10 408.20C1376.10 406.00 1373.30 406.50 1372.50 409.50L1370.70 417.20C1370.10 420.00 1368.10 420.50 1366.70 418.80M1368.90 411.10L1374.90 410.30" stroke="#90d880" stroke-width="1.8" stroke-linecap="round" fill="none"/><path d="M1624.20 408.20C1623.20 406.00 1620.40 406.50 1619.60 409.50L1617.80 417.20C1617.20 420.00 1615.20 420.50 1613.80 418.80M1616.00 411.10L1622.00 410.30" stroke="#90d880" stroke-width="1.8" stroke-linecap="round" fill="none"/><path d="M635.80 284.65C634.80 282.45 632.00 282.95 631.20 285.95L629.40 293.65C628.80 296.45 626.80 296.95 625.40 295.25M627.60 287.55L633.60 286.75" stroke="#90d880" stroke-width="1.8" stroke-linecap="round" fill="none"/><path d="M635.80 425.85C634.80 423.65 632.00 424.15 631.20 427.15L629.40 434.85C628.80 437.65 626.80 438.15 625.40 436.45M627.60 428.75L633.60 427.95" stroke="#90d880" stroke-width="1.8" stroke-linecap="round" fill="none"/><path d="M635.80 567.05C634.80 564.85 632.00 565.35 631.20 568.35L629.40 576.05C628.80 578.85 626.80 579.35 625.40 577.65M627.60 569.95L633.60 569.15" stroke="#90d880" stroke-width="1.8" stroke-linecap="round" fill="none"/><path d="M635.80 708.25C634.80 706.05 632.00 706.55 631.20 709.55L629.40 717.25C628.80 720.05 626.80 720.55 625.40 718.85M627.60 711.15L633.60 710.35" stroke="#90d880" stroke-width="1.8" stroke-linecap="round" fill="none"/><path d="M671.10 849.45C670.10 847.25 667.30 847.75 666.50 850.75L664.70 858.45C664.10 861.25 662.10 861.75 660.70 860.05M662.90 852.35L668.90 851.55" stroke="#90d880" stroke-width="1.8" stroke-linecap="round" fill="none"/><path d="M671.10 973.00C670.10 970.80 667.30 971.30 666.50 974.30L664.70 982.00C664.10 984.80 662.10 985.30 660.70 983.60M662.90 975.90L668.90 975.10" stroke="#90d880" stroke-width="1.8" stroke-linecap="round" fill="none"/><clipPath id="dsc"><rect x="1566.90" y="340.80" width="214.30" height="22.20"/></clipPath><g clip-path="url(#dsc)"><path d="M1473.80 363.00L1492.30 340.80L1512.30 340.80L1493.80 363.00Z" fill="#646c22"/><path d="M1509.10 363.00L1527.60 340.80L1547.60 340.80L1529.10 363.00Z" fill="#646c22"/><path d="M1544.40 363.00L1562.90 340.80L1582.90 340.80L1564.40 363.00Z" fill="#646c22"/><path d="M1579.70 363.00L1598.20 340.80L1618.20 340.80L1599.70 363.00Z" fill="#646c22"/><path d="M1615.00 363.00L1633.50 340.80L1653.50 340.80L1635.00 363.00Z" fill="#646c22"/><path d="M1650.30 363.00L1668.80 340.80L1688.80 340.80L1670.30 363.00Z" fill="#646c22"/><path d="M1685.60 363.00L1704.10 340.80L1724.10 340.80L1705.60 363.00Z" fill="#646c22"/><path d="M1720.90 363.00L1739.40 340.80L1759.40 340.80L1740.90 363.00Z" fill="#646c22"/><path d="M1756.20 363.00L1774.70 340.80L1794.70 340.80L1776.20 363.00Z" fill="#646c22"/><path d="M1791.50 363.00L1810.00 340.80L1830.00 340.80L1811.50 363.00Z" fill="#646c22"/><path d="M1826.80 363.00L1845.30 340.80L1865.30 340.80L1846.80 363.00Z" fill="#646c22"/><path d="M1862.10 363.00L1880.60 340.80L1900.60 340.80L1882.10 363.00Z" fill="#646c22"/><path d="M1897.40 363.00L1915.90 340.80L1935.90 340.80L1917.40 363.00Z" fill="#646c22"/><path d="M1932.70 363.00L1951.20 340.80L1971.20 340.80L1952.70 363.00Z" fill="#646c22"/><path d="M1968.00 363.00L1986.50 340.80L2006.50 340.80L1988.00 363.00Z" fill="#646c22"/><path d="M2003.30 363.00L2021.80 340.80L2041.80 340.80L2023.30 363.00Z" fill="#646c22"/></g><path d="M1670.40 374.70L1675.40 369.70L1680.40 374.70" stroke="#f0f0f0" stroke-width="2" fill="none"/></svg><div class="t tt" style="left:325.90px;top:52.20px;transform:scaleX(0.89);-webkit-text-stroke:0.35px #d8d8d8">Delay</div><div class="t tt" style="left:1596.70px;top:52.20px;transform:scaleX(0.957);-webkit-text-stroke:0.35px #d8d8d8">Print String</div><div class="t tt" style="left:255.30px;top:634.65px;transform:scaleX(0.889);-webkit-text-stroke:0.35px #d8d8d8">Get Server DateTime</div><div class="t tt" style="left:943.65px;top:175.75px;transform:scaleX(0.913);-webkit-text-stroke:0.35px #d8d8d8">Append</div><div class="t tt" style="left:943.65px;top:299.30px;transform:scaleX(0.913);-webkit-text-stroke:0.35px #d8d8d8">Append</div><div class="t tt" style="left:943.65px;top:440.50px;transform:scaleX(0.913);-webkit-text-stroke:0.35px #d8d8d8">Append</div><div class="t tt" style="left:926.00px;top:599.35px;transform:scaleX(0.913);-webkit-text-stroke:0.35px #d8d8d8">Append</div><div class="t tt" style="left:926.00px;top:740.55px;transform:scaleX(0.913);-webkit-text-stroke:0.35px #d8d8d8">Append</div><div class="t tt" style="left:943.65px;top:881.75px;transform:scaleX(0.913);-webkit-text-stroke:0.35px #d8d8d8">Append</div><div class="t tt" style="left:1384.90px;top:405.20px;transform:scaleX(0.913);-webkit-text-stroke:0.35px #d8d8d8">Append</div><div class="t tt" style="left:1632.00px;top:405.20px;transform:scaleX(0.913);-webkit-text-stroke:0.35px #d8d8d8">Append</div><div class="t tt" style="left:643.60px;top:281.65px;transform:scaleX(0.86);-webkit-text-stroke:0.35px #d8d8d8">Get Year</div><div class="t tt" style="left:643.60px;top:422.85px;transform:scaleX(0.908);-webkit-text-stroke:0.35px #d8d8d8">Get Month</div><div class="t tt" style="left:643.60px;top:564.05px;transform:scaleX(0.84);-webkit-text-stroke:0.35px #d8d8d8">Get Day</div><div class="t tt" style="left:643.60px;top:705.25px;transform:scaleX(0.88);-webkit-text-stroke:0.35px #d8d8d8">Get Hour</div><div class="t tt" style="left:678.90px;top:846.45px;transform:scaleX(0.913);-webkit-text-stroke:0.35px #d8d8d8">Get Minute</div><div class="t tt" style="left:678.90px;top:970.00px;transform:scaleX(0.876);-webkit-text-stroke:0.35px #d8d8d8">Get Second</div><div class="t" style="left:116.60px;width:400px;text-align:right;top:86.00px;font-size:14px;transform:scaleX(0.957);transform-origin:100% 50%">Completed</div><div class="t" style="left:331.90px;top:123.20px;font-size:14px;transform:scaleX(0.93)">Duration</div><div class="t" style="left:1602.20px;top:120.60px;font-size:14px;transform:scaleX(0.97)">In String</div><div class="t" style="left:1602.20px;top:156.90px;font-size:14px;transform:scaleX(0.956)">Print to Screen</div><div class="t" style="left:1602.20px;top:194.50px;font-size:14px;transform:scaleX(0.952)">Print to Log</div><div class="t" style="left:1602.20px;top:231.80px;font-size:14px;transform:scaleX(0.935)">Text Color</div><div class="t" style="left:1602.20px;top:270.40px;font-size:14px;transform:scaleX(0.93)">Duration</div><div class="t" style="left:1602.20px;top:310.00px;font-size:14px;transform:scaleX(0.93)">Key</div><div class="t" style="left:-9.50px;width:400px;text-align:right;top:703.65px;font-size:14px;transform:scaleX(0.935);transform-origin:100% 50%">Out Server Time</div><div class="t" style="left:948.45px;top:211.85px;font-size:14px;transform:scaleX(0.92)">A</div><div class="t" style="left:723.45px;width:400px;text-align:right;top:208.75px;font-size:14px;transform:scaleX(0.93);transform-origin:100% 50%">Return Value</div><div class="t" style="left:948.45px;top:248.55px;font-size:14px;transform:scaleX(0.92)">B</div><div class="t" style="left:724.95px;width:400px;text-align:right;top:248.75px;font-size:17px;transform:scaleX(0.87);transform-origin:100% 50%">Add pin</div><div class="t" style="left:948.45px;top:335.40px;font-size:14px;transform:scaleX(0.92)">A</div><div class="t" style="left:736.45px;width:400px;text-align:right;top:332.30px;font-size:14px;transform:scaleX(0.93);transform-origin:100% 50%">Return Value</div><div class="t" style="left:948.45px;top:372.10px;font-size:14px;transform:scaleX(0.92)">B</div><div class="t" style="left:737.95px;width:400px;text-align:right;top:372.30px;font-size:17px;transform:scaleX(0.87);transform-origin:100% 50%">Add pin</div><div class="t" style="left:948.45px;top:476.60px;font-size:14px;transform:scaleX(0.92)">A</div><div class="t" style="left:719.45px;width:400px;text-align:right;top:473.50px;font-size:14px;transform:scaleX(0.93);transform-origin:100% 50%">Return Value</div><div class="t" style="left:948.45px;top:513.30px;font-size:14px;transform:scaleX(0.92)">B</div><div class="t" style="left:720.95px;width:400px;text-align:right;top:513.50px;font-size:17px;transform:scaleX(0.87);transform-origin:100% 50%">Add pin</div><div class="t" style="left:930.80px;top:635.45px;font-size:14px;transform:scaleX(0.92)">A</div><div class="t" style="left:709.10px;width:400px;text-align:right;top:632.35px;font-size:14px;transform:scaleX(0.93);transform-origin:100% 50%">Return Value</div><div class="t" style="left:930.80px;top:672.15px;font-size:14px;transform:scaleX(0.92)">B</div><div class="t" style="left:710.60px;width:400px;text-align:right;top:672.35px;font-size:17px;transform:scaleX(0.87);transform-origin:100% 50%">Add pin</div><div class="t" style="left:930.80px;top:776.65px;font-size:14px;transform:scaleX(0.92)">A</div><div class="t" style="left:721.90px;width:400px;text-align:right;top:773.55px;font-size:14px;transform:scaleX(0.93);transform-origin:100% 50%">Return Value</div><div class="t" style="left:930.80px;top:813.35px;font-size:14px;transform:scaleX(0.92)">B</div><div class="t" style="left:723.40px;width:400px;text-align:right;top:813.55px;font-size:17px;transform:scaleX(0.87);transform-origin:100% 50%">Add pin</div><div class="t" style="left:948.45px;top:917.85px;font-size:14px;transform:scaleX(0.92)">A</div><div class="t" style="left:742.65px;width:400px;text-align:right;top:914.75px;font-size:14px;transform:scaleX(0.93);transform-origin:100% 50%">Return Value</div><div class="t" style="left:948.45px;top:954.55px;font-size:14px;transform:scaleX(0.92)">B</div><div class="t" style="left:744.15px;width:400px;text-align:right;top:954.75px;font-size:17px;transform:scaleX(0.87);transform-origin:100% 50%">Add pin</div><div class="t" style="left:1390.40px;top:437.90px;font-size:14px;transform:scaleX(0.92)">A</div><div class="t" style="left:1390.40px;top:471.70px;font-size:14px;transform:scaleX(0.92)">B</div><div class="t" style="left:1390.40px;top:505.40px;font-size:14px;transform:scaleX(0.92)">C</div><div class="t" style="left:1390.40px;top:539.10px;font-size:14px;transform:scaleX(0.92)">D</div><div class="t" style="left:1390.40px;top:572.90px;font-size:14px;transform:scaleX(0.92)">E</div><div class="t" style="left:1390.40px;top:607.20px;font-size:14px;transform:scaleX(0.92)">F</div><div class="t" style="left:1111.60px;width:400px;text-align:right;top:438.90px;font-size:14px;transform:scaleX(0.93);transform-origin:100% 50%">Return Value</div><div class="t" style="left:1113.10px;width:400px;text-align:right;top:478.70px;font-size:17px;transform:scaleX(0.87);transform-origin:100% 50%">Add pin</div><div class="t" style="left:1637.20px;top:440.70px;font-size:14px;transform:scaleX(0.92)">A</div><div class="t" style="left:1378.40px;width:400px;text-align:right;top:438.50px;font-size:14px;transform:scaleX(0.93);transform-origin:100% 50%">Return Value</div><div class="t" style="left:1637.20px;top:478.10px;font-size:14px;transform:scaleX(0.92)">B</div><div class="t" style="left:1378.40px;width:400px;text-align:right;top:478.20px;font-size:17px;transform:scaleX(0.87);transform-origin:100% 50%">Add pin</div><div class="t" style="left:648.60px;top:314.65px;font-size:14px;transform:scaleX(0.92)">A</div><div class="t" style="left:364.50px;width:400px;text-align:right;top:314.65px;font-size:14px;transform:scaleX(0.93);transform-origin:100% 50%">Return Value</div><div class="t" style="left:648.60px;top:455.85px;font-size:14px;transform:scaleX(0.92)">A</div><div class="t" style="left:364.50px;width:400px;text-align:right;top:455.85px;font-size:14px;transform:scaleX(0.93);transform-origin:100% 50%">Return Value</div><div class="t" style="left:648.60px;top:597.05px;font-size:14px;transform:scaleX(0.92)">A</div><div class="t" style="left:364.50px;width:400px;text-align:right;top:597.05px;font-size:14px;transform:scaleX(0.93);transform-origin:100% 50%">Return Value</div><div class="t" style="left:648.60px;top:738.25px;font-size:14px;transform:scaleX(0.92)">A</div><div class="t" style="left:364.50px;width:400px;text-align:right;top:738.25px;font-size:14px;transform:scaleX(0.93);transform-origin:100% 50%">Return Value</div><div class="t" style="left:683.90px;top:879.45px;font-size:14px;transform:scaleX(0.92)">A</div><div class="t" style="left:399.80px;width:400px;text-align:right;top:879.45px;font-size:14px;transform:scaleX(0.93);transform-origin:100% 50%">Return Value</div><div class="t" style="left:683.90px;top:1003.00px;font-size:14px;transform:scaleX(0.92)">A</div><div class="t" style="left:399.80px;width:400px;text-align:right;top:1003.00px;font-size:14px;transform:scaleX(0.93);transform-origin:100% 50%">Return Value</div><div class="t" style="left:393.10px;top:122.20px;font-size:16.5px;color:#c4c4c4;-webkit-text-stroke:0.2px #c4c4c4;transform:scaleX(0.93)">1.0</div><div class="t" style="left:1663.80px;top:267.95px;font-size:16.5px;color:#c4c4c4;-webkit-text-stroke:0.2px #c4c4c4;transform:scaleX(0.93)">10.0</div><div class="t" style="left:1637.30px;top:308.35px;font-size:16.5px;color:#c4c4c4;-webkit-text-stroke:0.2px #c4c4c4;transform:scaleX(0.93)">None</div><div class="t" style="left:972.25px;top:210.85px;font-size:16.5px;color:#c4c4c4;-webkit-text-stroke:0.2px #c4c4c4;transform:scaleX(0.93)">Year:</div><div class="t" style="left:972.25px;top:334.40px;font-size:16.5px;color:#c4c4c4;-webkit-text-stroke:0.2px #c4c4c4;transform:scaleX(0.93)">Month:</div><div class="t" style="left:972.25px;top:475.60px;font-size:16.5px;color:#c4c4c4;-webkit-text-stroke:0.2px #c4c4c4;transform:scaleX(0.93)">Day:</div><div class="t" style="left:954.60px;top:634.45px;font-size:16.5px;color:#c4c4c4;-webkit-text-stroke:0.2px #c4c4c4;transform:scaleX(0.93)">Hour:</div><div class="t" style="left:954.60px;top:775.65px;font-size:16.5px;color:#c4c4c4;-webkit-text-stroke:0.2px #c4c4c4;transform:scaleX(0.93)">Minute:</div><div class="t" style="left:972.25px;top:916.85px;font-size:16.5px;color:#c4c4c4;-webkit-text-stroke:0.2px #c4c4c4;transform:scaleX(0.93)">Second:</div><div class="t" style="left:1565.90px;width:216.3px;text-align:center;top:343.20px;font-size:16px;color:#f0f0f0;transform:scaleX(0.9);transform-origin:50% 50%">Development Only</div></body></html>
